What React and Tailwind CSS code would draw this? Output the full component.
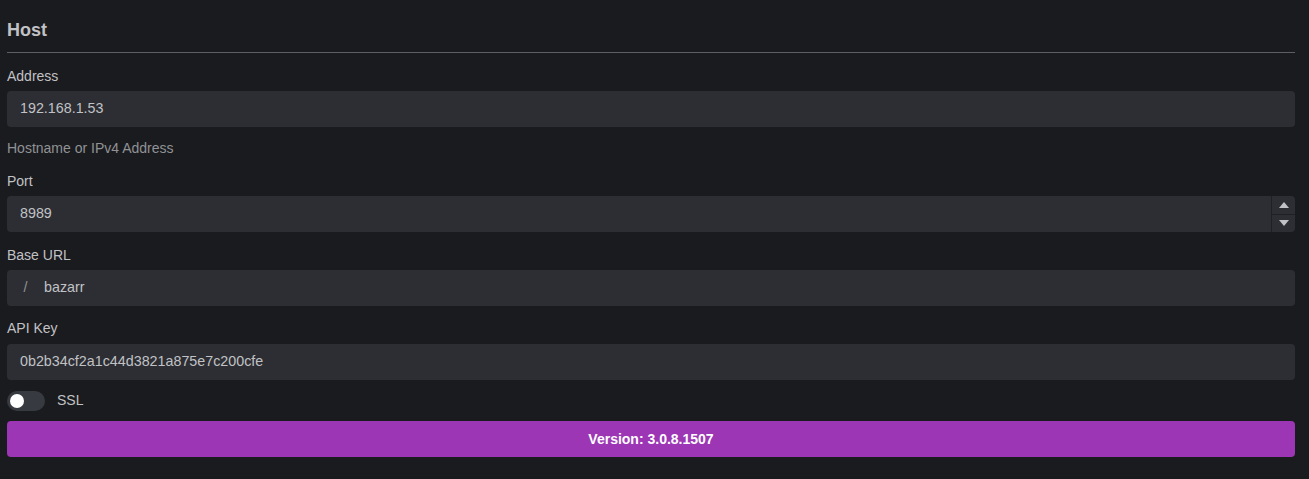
export default function App() {
  return (
    <div className="min-h-[479px] w-full bg-[#1a1b1e] pl-[7px] pr-[14px] text-[#c1c2c5] font-['Liberation_Sans',Arial,sans-serif]">
      <div className="flex flex-col">
        <h2 className="pt-[19px] text-[18px] font-bold leading-[22px] text-[#c1c2c5]">Host</h2>
        <div className="mt-[11px] h-px bg-[#5c5f66]" />

        <label className="mt-[12px] text-[14px] leading-[22px]">Address</label>
        <div className="mt-[4px] flex h-[36px] items-center rounded bg-[#2c2e33] px-[13px] text-[14.3px]">192.168.1.53</div>
        <p className="mt-[10px] text-[14px] leading-[22px] text-[#909296]">Hostname or IPv4 Address</p>

        <label className="mt-[11px] text-[14px] leading-[22px]">Port</label>
        <div className="mt-[4px] flex h-[36px] items-center rounded bg-[#2c2e33] text-[14.3px]">
          <span className="flex-1 px-[13px]">8989</span>
          <div className="flex h-full w-[24px] flex-col border-l border-[#1f2023]">
            <div className="flex flex-1 items-center justify-center border-b border-[#1f2023]">
              <svg width="10" height="6" viewBox="0 0 10 6"><path d="M5 0 L10 6 L0 6 Z" fill="#c1c2c5" /></svg>
            </div>
            <div className="flex flex-1 items-center justify-center">
              <svg width="10" height="6" viewBox="0 0 10 6"><path d="M0 0 L10 0 L5 6 Z" fill="#c1c2c5" /></svg>
            </div>
          </div>
        </div>

        <label className="mt-[12px] text-[14px] leading-[22px]">Base URL</label>
        <div className="mt-[4px] flex h-[36px] items-center rounded bg-[#2c2e33] text-[14.3px]">
          <span className="w-[37px] text-center text-[#909296]">/</span>
          <span>bazarr</span>
        </div>

        <label className="mt-[11px] text-[14px] leading-[22px]">API Key</label>
        <div className="mt-[5px] flex h-[36px] items-center rounded bg-[#2c2e33] px-[13px] text-[14.3px]">0b2b34cf2a1c44d3821a875e7c200cfe</div>

        <div className="mt-[10px] flex items-center gap-[12px]">
          <div className="flex h-[20px] w-[38px] items-center rounded-full bg-[#373a40] px-[3px]">
            <div className="h-[14px] w-[14px] rounded-full bg-white" />
          </div>
          <span className="text-[14px]">SSL</span>
        </div>

        <button className="mt-[10px] flex h-[36px] items-center justify-center rounded bg-[#9c36b5] text-[14px] font-bold text-white">
          Version: 3.0.8.1507
        </button>
      </div>
    </div>
  );
}
